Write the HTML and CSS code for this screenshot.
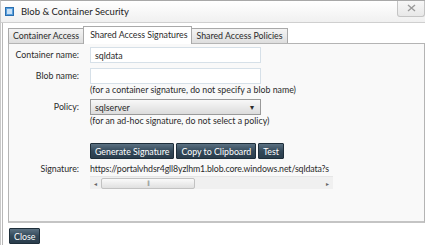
FILE: index.html
```html
<!DOCTYPE html>
<html lang="en">
<head>
  <meta charset="UTF-8">
  <title>Blob &amp; Container Security</title>
  <link rel="stylesheet" href="styles.css">
</head>
<body>

<div class="window">
  <div class="titlebar">
    <span class="app-icon"></span>
    <span class="title">Blob &amp; Container Security</span>
    <span class="close-x">
      <svg width="9" height="8" viewBox="0 0 9 8"><path d="M1 1 L8 7 M8 1 L1 7" stroke="#9a9a9a" stroke-width="1.4" fill="none"/></svg>
    </span>
  </div>

  <div class="content">
    <div class="tabs">
      <div class="tab">Container Access</div>
      <div class="tab active">Shared Access Signatures</div>
      <div class="tab">Shared Access Policies</div>
    </div>

    <div class="panel">
      <div class="row">
        <label>Container name:</label>
        <div class="field"><div class="input">sqldata</div></div>
      </div>
      <div class="row">
        <label>Blob name:</label>
        <div class="field"><div class="input"></div></div>
      </div>
      <div class="hint">(for a container signature, do not specify a blob name)</div>
      <div class="row policy">
        <label>Policy:</label>
        <div class="field">
          <div class="select">sqlserver<span class="arrow">&#9662;</span></div>
        </div>
      </div>
      <div class="hint">(for an ad-hoc signature, do not select a policy)</div>

      <div class="actions">
        <button class="btn">Generate Signature</button>
        <button class="btn">Copy to Clipboard</button>
        <button class="btn">Test</button>
      </div>

      <div class="row sig">
        <label>Signature:</label>
        <div class="sig-box">
          <div class="sig-text">https://portalvhdsr4gll8yzlhm1.blob.core.windows.net/sqldata?s</div>
          <div class="hscroll">
            <span class="sarrow">&#9666;</span>
            <span class="thumb">|||</span>
            <span class="sarrow right">&#9656;</span>
          </div>
        </div>
      </div>
    </div>

    <div class="footer">
      <button class="btn">Close</button>
    </div>
  </div>
</div>

</body>
</html>
```

FILE: styles.css
```css
body {
  margin: 0;
  padding: 0;
  background: #fff;
  font-family: Lato, "Open Sans", sans-serif;
  font-size: 8.8px;
  color: #2a2a2a;
}
.window {
  width: 425px;
  height: 245px;
  box-sizing: border-box;
  border-top: 1px solid #a8a8a8;
  border-left: 1px solid #c8c8c8;
  overflow: hidden;
}
.titlebar {
  height: 21px;
  display: flex;
  align-items: center;
  padding-left: 4px;
  background: linear-gradient(#ffffff, #f0f0f0);
  border-bottom: 1px solid #cfcfcf;
  position: relative;
}
.app-icon {
  width: 7px;
  height: 7px;
  border: 1px solid #2a6fb0;
  background: #c8e0f5;
  box-shadow: inset 0 0 0 1px #5aa0dd;
  margin-right: 7px;
}
.title {
  font-size: 9.5px;
  color: #222;
}
.close-x {
  position: absolute;
  right: 0;
  top: -1px;
  width: 28px;
  height: 17px;
  box-sizing: border-box;
  border: 1px solid #c4c4c4;
  border-top: none;
  border-radius: 0 0 3px 3px;
  background: linear-gradient(#f8f8f8, #e8e8e8);
  display: flex;
  align-items: center;
  justify-content: center;
}
.content {
  border-left: 1px solid #b8b8b8;
  margin-left: 1px;
  padding: 3px 0 0 5px;
  height: 222px;
  box-sizing: border-box;
}
.tabs {
  display: flex;
  align-items: flex-end;
  height: 17px;
}
.tab {
  height: 14px;
  line-height: 14px;
  padding: 0 4px;
  border: 1px solid #a9a9a9;
  border-bottom: none;
  background: linear-gradient(#f4f4f4, #dedede);
  margin-right: -1px;
}
.tab.active {
  height: 17px;
  line-height: 16px;
  padding: 0 4px 0 6px;
  background: #fff;
  position: relative;
  z-index: 1;
  margin-bottom: -1px;
}
.panel {
  border: 1px solid #b4b4b4;
  border-bottom: 2px solid #c4c4c4;
  background: #f9f9f9;
  height: 180px;
  box-sizing: border-box;
}
.row {
  display: flex;
  align-items: center;
  height: 21px;
}
.row label {
  width: 70px;
  text-align: right;
  padding-right: 11px;
  flex-shrink: 0;
}
.input, .select {
  width: 171px;
  height: 16px;
  line-height: 15px;
  box-sizing: border-box;
  border: 1px solid #d6e0e8;
  background: #fff;
  padding-left: 4px;
}
.select {
  border: 1px solid #9a9a9a;
  background: linear-gradient(#f8f8f8, #dcdcdc);
  position: relative;
}
.select .arrow {
  position: absolute;
  right: 6px;
  top: 0;
  font-size: 8px;
}
.hint {
  padding-left: 81px;
  height: 12px;
  line-height: 12px;
  margin-top: -2px;
}
.actions {
  display: flex;
  gap: 2px;
  padding-left: 81px;
  margin-top: 16px;
  margin-bottom: 3px;
}
.btn {
  font-family: inherit;
  font-size: 8.8px;
  color: #fff;
  height: 16px;
  padding: 0 4px;
  border: 1px solid #1e2e3a;
  border-radius: 1px;
  background: linear-gradient(#5b7182, #34495a 50%, #2a3d4c);
}
.row.sig {
  align-items: flex-start;
  height: auto;
}
.row.sig label {
  line-height: 14px;
}
.sig-box {
  width: 243px;
}
.sig-text {
  line-height: 14px;
  white-space: nowrap;
  overflow: hidden;
  letter-spacing: -0.12px;
}
.hscroll {
  display: flex;
  align-items: center;
  height: 12px;
  background: #f0f0f0;
  border-top: 1px solid #e6e6e6;
}
.sarrow {
  width: 11px;
  text-align: center;
  font-size: 6px;
  color: #666;
}
.thumb {
  width: 92px;
  height: 9px;
  line-height: 8px;
  text-align: center;
  font-size: 6px;
  color: #777;
  border: 1px solid #c2c2c2;
  border-radius: 2px;
  background: linear-gradient(#fafafa, #e0e0e0);
  letter-spacing: -1px;
}
.sarrow.right {
  margin-left: auto;
}
.footer {
  padding-top: 5px;
  margin-left: 1px;
}
```
